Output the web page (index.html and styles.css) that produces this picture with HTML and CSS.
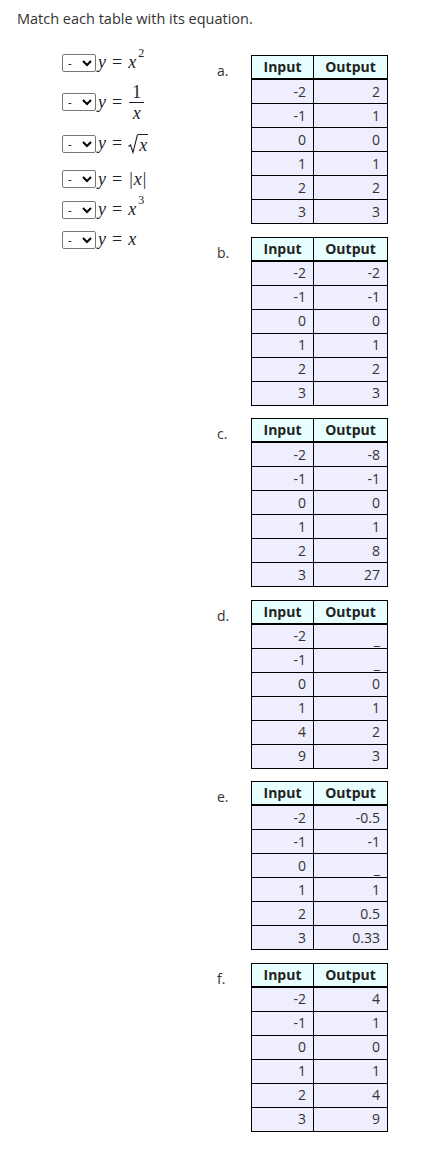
FILE: index.html
```html
<!DOCTYPE html>
<html>
<head>
<meta charset="utf-8">
<link rel="stylesheet" href="styles.css">
</head>
<body>
<p class="title">Match each table with its equation.</p>
<div class="main">
  <div class="eqs">
    <div class="eq r1"><select class="sel"><option>-</option><option>a</option><option>b</option><option>c</option><option>d</option><option>e</option><option>f</option></select><span class="m"><i>y</i><span class="op">=</span><i>x</i><sup>2</sup></span></div>
    <div class="eq r2"><select class="sel"><option>-</option><option>a</option><option>b</option><option>c</option><option>d</option><option>e</option><option>f</option></select><span class="m"><i>y</i><span class="op">=</span><span class="frac"><span class="num">1</span><span class="den"><i>x</i></span></span></span></div>
    <div class="eq r3"><select class="sel"><option>-</option><option>a</option><option>b</option><option>c</option><option>d</option><option>e</option><option>f</option></select><span class="m"><i>y</i><span class="op">=</span><span class="sqrt"><svg class="rad" width="10" height="20" viewBox="0 0 10 20"><path d="M0.5 12.5 L2.5 11 L5 18.5 L9.5 0.5" fill="none" stroke="#1e1e2e" stroke-width="1.1"/></svg><span class="rad-body"><i>x</i></span></span></span></div>
    <div class="eq r4"><select class="sel"><option>-</option><option>a</option><option>b</option><option>c</option><option>d</option><option>e</option><option>f</option></select><span class="m"><i>y</i><span class="op">=</span><span class="bar">|</span><i>x</i><span class="bar">|</span></span></div>
    <div class="eq r5"><select class="sel"><option>-</option><option>a</option><option>b</option><option>c</option><option>d</option><option>e</option><option>f</option></select><span class="m"><i>y</i><span class="op">=</span><i>x</i><sup>3</sup></span></div>
    <div class="eq r6"><select class="sel"><option>-</option><option>a</option><option>b</option><option>c</option><option>d</option><option>e</option><option>f</option></select><span class="m"><i>y</i><span class="op">=</span><i>x</i></span></div>
  </div>
  <div class="tables">
    <div class="item"><span class="lbl">a.</span>
      <table class="tbl"><thead><tr><th>Input</th><th>Output</th></tr></thead>
      <tbody><tr><td>-2</td><td>2</td></tr><tr><td>-1</td><td>1</td></tr><tr><td>0</td><td>0</td></tr><tr><td>1</td><td>1</td></tr><tr><td>2</td><td>2</td></tr><tr><td>3</td><td>3</td></tr></tbody></table>
    </div>
    <div class="item"><span class="lbl">b.</span>
      <table class="tbl"><thead><tr><th>Input</th><th>Output</th></tr></thead>
      <tbody><tr><td>-2</td><td>-2</td></tr><tr><td>-1</td><td>-1</td></tr><tr><td>0</td><td>0</td></tr><tr><td>1</td><td>1</td></tr><tr><td>2</td><td>2</td></tr><tr><td>3</td><td>3</td></tr></tbody></table>
    </div>
    <div class="item"><span class="lbl">c.</span>
      <table class="tbl"><thead><tr><th>Input</th><th>Output</th></tr></thead>
      <tbody><tr><td>-2</td><td>-8</td></tr><tr><td>-1</td><td>-1</td></tr><tr><td>0</td><td>0</td></tr><tr><td>1</td><td>1</td></tr><tr><td>2</td><td>8</td></tr><tr><td>3</td><td>27</td></tr></tbody></table>
    </div>
    <div class="item"><span class="lbl">d.</span>
      <table class="tbl"><thead><tr><th>Input</th><th>Output</th></tr></thead>
      <tbody><tr><td>-2</td><td class="u">_</td></tr><tr><td>-1</td><td class="u">_</td></tr><tr><td>0</td><td>0</td></tr><tr><td>1</td><td>1</td></tr><tr><td>4</td><td>2</td></tr><tr><td>9</td><td>3</td></tr></tbody></table>
    </div>
    <div class="item"><span class="lbl">e.</span>
      <table class="tbl"><thead><tr><th>Input</th><th>Output</th></tr></thead>
      <tbody><tr><td>-2</td><td>-0.5</td></tr><tr><td>-1</td><td>-1</td></tr><tr><td>0</td><td class="u">_</td></tr><tr><td>1</td><td>1</td></tr><tr><td>2</td><td>0.5</td></tr><tr><td>3</td><td>0.33</td></tr></tbody></table>
    </div>
    <div class="item"><span class="lbl">f.</span>
      <table class="tbl"><thead><tr><th>Input</th><th>Output</th></tr></thead>
      <tbody><tr><td>-2</td><td>4</td></tr><tr><td>-1</td><td>1</td></tr><tr><td>0</td><td>0</td></tr><tr><td>1</td><td>1</td></tr><tr><td>2</td><td>4</td></tr><tr><td>3</td><td>9</td></tr></tbody></table>
    </div>
  </div>
</div>
</body>
</html>
```
FILE: styles.css
```css
body {
  margin: 0;
  font-family: "Open Sans", "Liberation Sans", sans-serif;
  color: #222;
  background: #fff;
}
.title {
  margin: 0;
  padding: 9px 0 0 17px;
  font-size: 14.5px;
  line-height: 20px;
  color: #333;
}
.main {
  display: flex;
  padding: 26px 0 0 62px;
}
.eqs {
  width: 155px;
  display: flex;
  flex-direction: column;
}
.eq {
  display: flex;
  align-items: center;
}
.r1 { height: 35px; margin-top: -10px; }
.r2 { height: 44px; }
.r3 { height: 39px; }
.r4 { height: 32px; }
.r5 { height: 29px; }
.r6 { height: 31px; }
.sel {
  width: 34px;
  height: 18px;
  font-size: 11px;
  font-family: "Liberation Sans", Arial, sans-serif;
  padding: 0 0 0 1px;
  margin: 0 2px 0 0;
  border: 1px solid #767676;
  border-radius: 2px;
  background-color: #fff;
  color: #000;
}
.m {
  font-family: "Liberation Serif", "Times New Roman", serif;
  font-size: 18px;
  color: #1e1e2e;
  display: inline-flex;
  align-items: center;
  white-space: nowrap;
}
.m i {
  font-family: "Liberation Serif", "Times New Roman", serif;
  font-style: italic;
}
.op {
  margin: 0 6px;
}
.m sup {
  font-size: 12px;
  align-self: flex-start;
  position: relative;
  top: -6px;
  margin-left: 2px;
}
.frac {
  display: inline-flex;
  flex-direction: column;
  align-items: center;
  margin-left: 1px;
}
.num {
  line-height: 18px;
  padding: 0 3px 1px;
  border-bottom: 1px solid #1e1e2e;
}
.den {
  line-height: 18px;
  padding-top: 1px;
}
.sqrt {
  display: inline-flex;
  align-items: flex-end;
}
.rad { display: block; }
.rad-body {
  border-top: 1px solid #1e1e2e;
  line-height: 18px;
  padding: 1px 1px 0 1px;
}
.bar { font-style: normal; margin: 0 1px; }
.tables {
  display: flex;
  flex-direction: column;
  gap: 12.6px;
}
.item {
  display: flex;
  align-items: flex-start;
}
.lbl {
  width: 34px;
  padding-top: 6px;
  font-size: 14px;
  line-height: 20px;
  color: #333;
}
.tbl {
  border-collapse: collapse;
  font-size: 14px;
}
.tbl th, .tbl td {
  border: 1px solid #000;
  padding: 0 7px;
}
.tbl th {
  background: #e8ffff;
  height: 22px;
  font-weight: bold;
  text-align: center;
  border-bottom: 2px solid #000;
  line-height: 20px;
}
.tbl th:first-child { width: 47px; }
.tbl th:last-child { width: 59px; }
.tbl td {
  background: #eeeeff;
  height: 23px;
  text-align: right;
  line-height: 20px;
  color: #333;
}
.tbl td.u { vertical-align: bottom; line-height: 16px; }
```
